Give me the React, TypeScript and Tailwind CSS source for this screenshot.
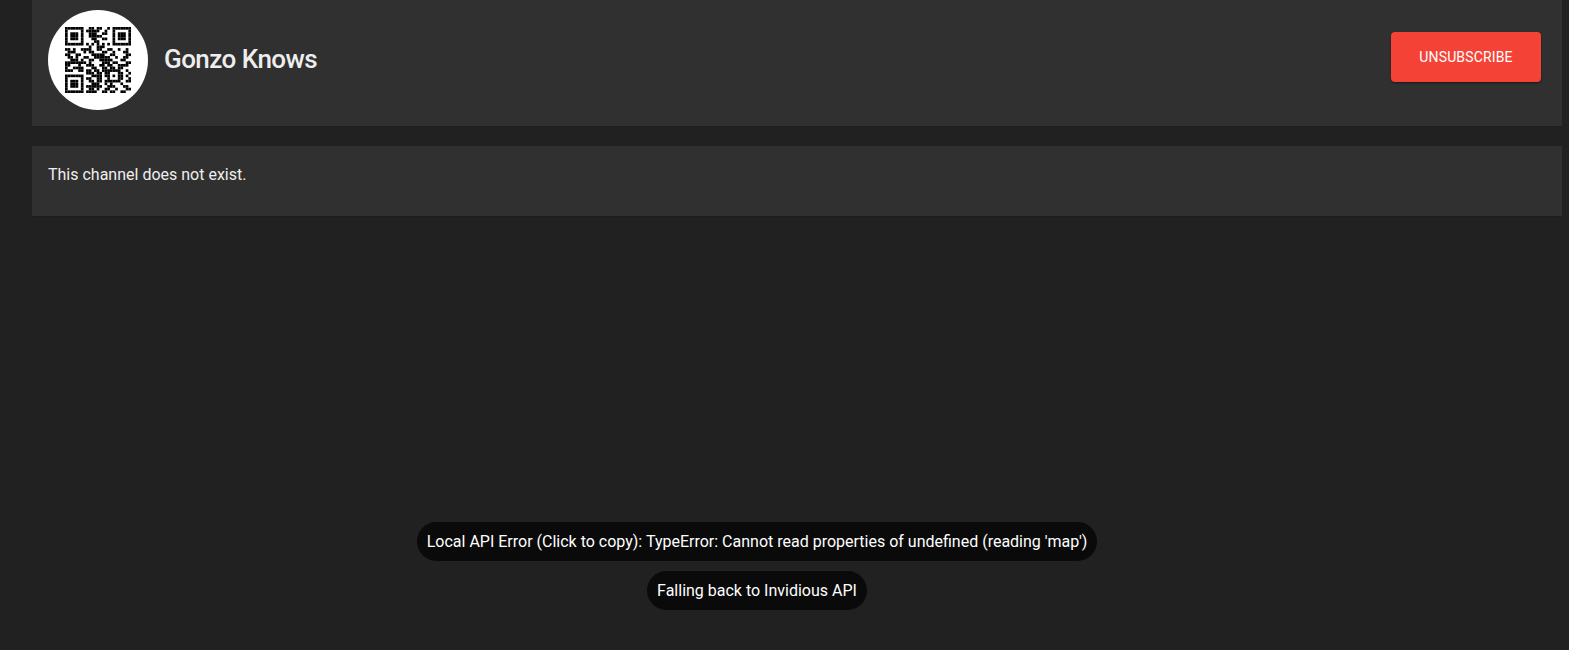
const QR = [
"1111111001101100101111111",
"1000001011111001001000001",
"1011101001110011001011101",
"1011101001111100001011101",
"1011101000110011001011101",
"1000001000011000001000001",
"1111111010101010101111111",
"0000000001001110000000000",
"1101001111001100110010010",
"0111000101100011001000110",
"1100110000111110011000011",
"0110100110011111100100110",
"0011101001100111110001100",
"1111111101000011101100011",
"1100010011100110110011110",
"1001111000110011011011000",
"1110011011011011111110010",
"0000000011101101100011001",
"1111111000111101101011010",
"1000001011001100100011001",
"1011101001101101111110011",
"1011101000111001010001000",
"1011101011111100111000110",
"1000001001101001100100011",
"1111111011110011011001100",
];

function QrCode() {
  return (
    <svg viewBox="0 0 25 25" className="h-[66px] w-[66px]" style={{ filter: "blur(0.6px)" }}>
      {QR.flatMap((row, y) =>
        row.split("").map((c, x) => (c === "1" ? <rect key={`${x}-${y}`} x={x} y={y} width="1.02" height="1.02" fill="#000" /> : null))
      )}
    </svg>
  );
}

export default function App() {
  return (
    <div className="relative h-[650px] overflow-hidden bg-[#212121] pl-8 pr-[7px] text-[#eeeeee]" style={{ fontFamily: "Roboto, sans-serif" }}>
      <div className="flex h-[126px] items-start justify-between bg-[#303030] pl-4 pr-[21px] pt-[10px] shadow-[0_1px_1px_rgba(0,0,0,0.1)]">
        <div className="flex items-center gap-4">
          <div className="flex h-[100px] w-[100px] items-center justify-center rounded-full bg-white">
            <QrCode />
          </div>
          <h1 className="mb-[3px] text-[26px] font-medium leading-8 tracking-[-0.55px] text-[#eeeeee]">Gonzo Knows</h1>
        </div>
        <button className="mt-[22px] flex h-[50px] w-[150px] items-center justify-center rounded bg-[#f44336] text-sm tracking-[0.15px] text-white shadow-[0_1px_2px_rgba(0,0,0,0.5)]">UNSUBSCRIBE</button>
      </div>
      <div className="mt-5 h-[70px] bg-[#303030] px-4 pt-[19px] text-base leading-5 shadow-[0_1px_1px_rgba(0,0,0,0.1)]">This channel does not exist.</div>
      <div className="absolute left-0 top-[522px] flex w-[1514px] flex-col items-center gap-[10px] text-base leading-5 text-white">
        <div className="flex h-[39px] items-center rounded-full bg-[#0a0a0a] px-[10px]">Local API Error (Click to copy): TypeError: Cannot read properties of undefined (reading 'map')</div>
        <div className="flex h-[39px] items-center rounded-full bg-[#0a0a0a] px-[10px]">Falling back to Invidious API</div>
      </div>
    </div>
  );
}
